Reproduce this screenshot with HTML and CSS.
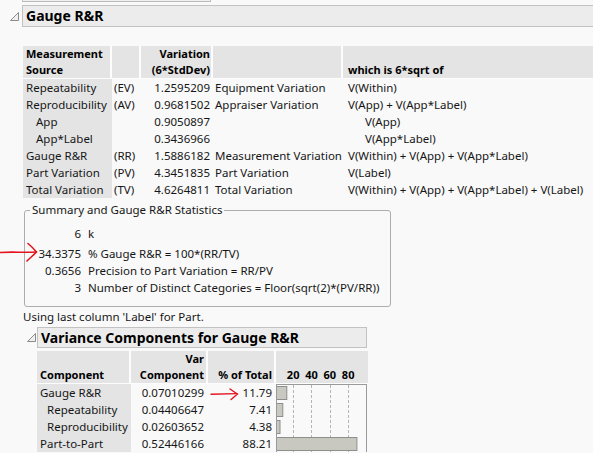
FILE: index.html
```html
<!DOCTYPE html>
<html lang="en">
<head>
    <meta charset="UTF-8">
    <meta name="viewport" content="width=device-width, initial-scale=1.0">
    <title>Gauge R&amp;R</title>
    <link rel="stylesheet" href="styles.css">
</head>
<body>
    <div class="prev-box"></div>

    <div class="outline top">
        <div class="outline-head">
            <span class="toggle">
                <svg width="9" height="9" viewBox="0 0 9 9"><polygon points="8.5,0.5 8.5,8.5 0.5,8.5" fill="#efefef" stroke="#8c8c8c"/></svg>
            </span>
            <div class="outline-title">Gauge R&amp;R</div>
        </div>
        <div class="outline-body">
            <table class="rr-table">
                <colgroup>
                    <col class="c-src"><col class="c-abbr"><col class="c-var"><col class="c-desc"><col class="c-of">
                </colgroup>
                <thead>
                    <tr>
                        <th class="label">Measurement<br>Source</th>
                        <th></th>
                        <th class="num">Variation<br>(6*StdDev)</th>
                        <th></th>
                        <th class="of">which is 6*sqrt of</th>
                    </tr>
                </thead>
                <tbody>
                    <tr><td class="label">Repeatability</td><td>(EV)</td><td class="num">1.2595209</td><td>Equipment Variation</td><td class="of">V(Within)</td></tr>
                    <tr><td class="label">Reproducibility</td><td>(AV)</td><td class="num">0.9681502</td><td>Appraiser Variation</td><td class="of">V(App) + V(App*Label)</td></tr>
                    <tr><td class="label indent">App</td><td></td><td class="num">0.9050897</td><td></td><td class="of indent">V(App)</td></tr>
                    <tr><td class="label indent">App*Label</td><td></td><td class="num">0.3436966</td><td></td><td class="of indent">V(App*Label)</td></tr>
                    <tr><td class="label">Gauge R&amp;R</td><td>(RR)</td><td class="num">1.5886182</td><td>Measurement Variation</td><td class="of">V(Within) + V(App) + V(App*Label)</td></tr>
                    <tr><td class="label">Part Variation</td><td>(PV)</td><td class="num">4.3451835</td><td>Part Variation</td><td class="of">V(Label)</td></tr>
                    <tr><td class="label">Total Variation</td><td>(TV)</td><td class="num">4.6264811</td><td>Total Variation</td><td class="of">V(Within) + V(App) + V(App*Label) + V(Label)</td></tr>
                </tbody>
            </table>

            <fieldset class="summary">
                <legend>Summary and Gauge R&amp;R Statistics</legend>
                <div class="stat first"><span class="val">6</span><span>k</span></div>
                <div class="stat"><span class="val">34.3375</span><span>% Gauge R&amp;R = 100*(RR/TV)</span></div>
                <div class="stat"><span class="val">0.3656</span><span>Precision to Part Variation = RR/PV</span></div>
                <div class="stat"><span class="val">3</span><span>Number of Distinct Categories = Floor(sqrt(2)*(PV/RR))</span></div>
            </fieldset>

            <p class="note">Using last column 'Label' for Part.</p>

            <div class="outline sub">
                <div class="outline-head">
                    <span class="toggle">
                        <svg width="9" height="9" viewBox="0 0 9 9"><polygon points="8.5,0.5 8.5,8.5 0.5,8.5" fill="#efefef" stroke="#8c8c8c"/></svg>
                    </span>
                    <div class="outline-title">Variance Components for Gauge R&amp;R</div>
                </div>
                <div class="outline-body">
                    <table class="vc-table">
                        <colgroup>
                            <col class="c-comp"><col class="c-vc"><col class="c-pct"><col class="c-bar">
                        </colgroup>
                        <thead>
                            <tr>
                                <th class="label">Component</th>
                                <th class="num">Var<br>Component</th>
                                <th class="num">% of Total</th>
                                <th class="axis"><span>20</span><span>40</span><span>60</span><span>80</span></th>
                            </tr>
                        </thead>
                        <tbody>
                            <tr>
                                <td class="label">Gauge R&amp;R</td>
                                <td class="num">0.07010299</td>
                                <td class="num">11.79</td>
                                <td class="plot" rowspan="4">
                                    <svg width="92" height="68" viewBox="0 0 92 68">
                                        <g stroke="#b4b4b4" stroke-dasharray="3 2">
                                            <line x1="17.5" y1="1" x2="17.5" y2="68"/>
                                            <line x1="35.5" y1="1" x2="35.5" y2="68"/>
                                            <line x1="54.5" y1="1" x2="54.5" y2="68"/>
                                            <line x1="72.5" y1="1" x2="72.5" y2="68"/>
                                        </g>
                                        <g fill="#c8c8c0" stroke="#8e8e8e">
                                            <rect x="0.5" y="2.5" width="10.3" height="13"/>
                                            <rect x="0.5" y="19.5" width="6.3" height="13"/>
                                            <rect x="0.5" y="36.5" width="3.5" height="13"/>
                                            <rect x="0.5" y="53.5" width="80.4" height="13"/>
                                        </g>
                                        <rect x="0.5" y="0.5" width="90" height="90" fill="none" stroke="#9a9a9a"/>
                                    </svg>
                                </td>
                            </tr>
                            <tr><td class="label indent">Repeatability</td><td class="num">0.04406647</td><td class="num">7.41</td></tr>
                            <tr><td class="label indent">Reproducibility</td><td class="num">0.02603652</td><td class="num">4.38</td></tr>
                            <tr><td class="label">Part-to-Part</td><td class="num">0.52446166</td><td class="num">88.21</td></tr>
                        </tbody>
                    </table>
                </div>
            </div>
        </div>
    </div>

    <!-- red hand-drawn markers -->
    <svg class="mark mark-rr" width="40" height="24" viewBox="0 0 40 24">
        <path d="M0 12.5 C12 11.5 24 12.8 36 12" fill="none" stroke="#e3141d" stroke-width="1.6" stroke-linecap="round"/>
        <path d="M28 3.5 C31 6 34 9 36.5 12 C33.5 15 30 18 27 21" fill="none" stroke="#e3141d" stroke-width="1.6" stroke-linecap="round"/>
    </svg>
    <svg class="mark mark-pct" width="32" height="16" viewBox="0 0 32 16">
        <path d="M2 8.2 L28 7.6" fill="none" stroke="#e3141d" stroke-width="1.4" stroke-linecap="round"/>
        <path d="M21 3 C24 5 26 6.5 28.5 8 C26 10 24 12 22 13.5" fill="none" stroke="#e3141d" stroke-width="1.4" stroke-linecap="round"/>
    </svg>
</body>
</html>
```

FILE: styles.css
```css
body {
    margin: 0;
    position: relative;
    overflow: hidden;
    background-color: #f9f9f9;
    font-family: "Noto Sans", "Segoe UI", sans-serif;
    font-size: 11.5px;
    color: #161616;
}
.prev-box {
    margin-left: 22px;
    width: 187px;
    height: 1px;
    background-color: #f0f0f0;
    border: 1px solid #bcbcbc;
    border-top: none;
}
.top {
    width: 640px;
}
.outline-head {
    display: flex;
    align-items: center;
    margin-top: 3px;
}
.toggle {
    width: 22px;
    box-sizing: border-box;
    padding-right: 3px;
    display: flex;
    justify-content: flex-end;
}
.toggle svg {
    display: block;
}
.outline-title {
    flex: 1;
    height: 20px;
    line-height: 20px;
    padding-left: 3px;
    border: 1px solid #c2c2c2;
    background-color: #ececec;
    font-size: 14px;
    font-weight: bold;
    color: #000;
    white-space: nowrap;
}
.outline-body {
    padding-left: 23px;
    padding-top: 19px;
}
.sub .outline-head {
    margin-top: 2px;
}
.sub .toggle {
    width: 14px;
    padding-right: 1px;
}
.sub .outline-title {
    flex: none;
    width: 325px;
    height: 19px;
    line-height: 19px;
}
.sub .outline-body {
    padding-left: 14px;
    padding-top: 3px;
}

/* tables */
table {
    table-layout: fixed;
    border-collapse: separate;
    border-spacing: 0;
}
th, td {
    padding: 0 2px;
    white-space: nowrap;
    overflow: visible;
    text-align: left;
}
th {
    height: 32px;
    box-sizing: border-box;
    line-height: 16px;
    vertical-align: bottom;
    background-color: #e4e4e4;
    border-right: 2px solid #fdfdfd;
    border-bottom: 1px solid #fdfdfd;
    font-size: 11px;
    font-weight: bold;
    color: #000;
}
td {
    height: 17px;
    line-height: 17px;
    border-right: 2px solid transparent;
}
td.label {
    background-color: #e4e4e4;
}
.label {
    padding-left: 3px;
}
.num {
    text-align: right;
}
.rr-table {
    width: 580px;
}
.rr-table .c-src { width: 89px; }
.rr-table .c-abbr { width: 29px; }
.rr-table .c-var { width: 72px; }
.rr-table .c-desc { width: 130px; }
.rr-table .c-of { width: 260px; }
.rr-table td.num, .rr-table th.num {
    padding-right: 1px;
}
.rr-table .of {
    padding-left: 5px;
}
.rr-table .label.indent {
    padding-left: 13px;
}
.rr-table .of.indent {
    padding-left: 22px;
}

.summary {
    margin: 4px 0 0 1px;
    width: 355px;
    padding: 0 5px 10px;
    border: 1px solid #adadad;
    border-radius: 3px;
}
.summary legend {
    padding: 0 2px;
    line-height: 16px;
}
.stat {
    display: grid;
    grid-template-columns: 51px auto;
    column-gap: 7px;
    line-height: 17px;
    white-space: nowrap;
}
.stat.first {
    margin-top: 7px;
    margin-bottom: 3px;
}
.stat .val {
    text-align: right;
}
.note {
    margin: 1px 0 0;
    line-height: 17px;
}

.vc-table {
    width: 331px;
}
.vc-table .c-comp { width: 94px; }
.vc-table .c-vc { width: 77px; }
.vc-table .c-pct { width: 68px; }
.vc-table .c-bar { width: 92px; }
.vc-table .label.indent {
    padding-left: 10px;
}
.vc-table th.axis {
    padding: 0 0 0 8px;
    border-right: none;
}
.axis span {
    display: inline-block;
    width: 18.33px;
    text-align: center;
}
td.plot {
    padding: 0;
    vertical-align: top;
    border-right: none;
}
td.plot svg {
    display: block;
}

.mark {
    position: absolute;
}
.mark-rr {
    left: 0;
    top: 240px;
}
.mark-pct {
    left: 209px;
    top: 386px;
}
```
